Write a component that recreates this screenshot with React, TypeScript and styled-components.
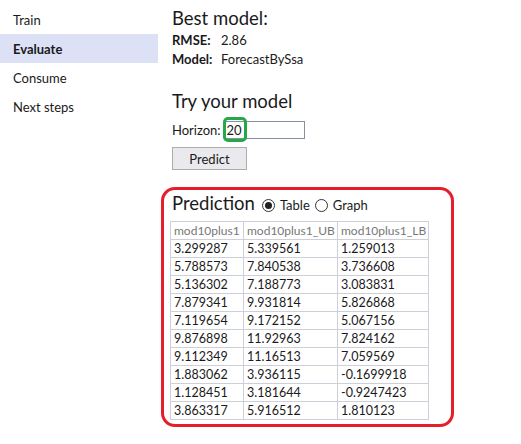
import React, { useState } from 'react';
import styled, { createGlobalStyle } from 'styled-components';

const GlobalStyle = createGlobalStyle`
  html, body {
    margin: 0;
    padding: 0;
    background: #ffffff;
  }
  body {
    font-family: "Segoe UI", Lato, "Noto Sans", "Liberation Sans", sans-serif;
    color: #1a1a1a;
    font-size: 13px;
  }
`;

const Page = styled.div`
  display: flex;
  width: 521px;
  height: 444px;
  overflow: hidden;
`;

const Sidebar = styled.nav`
  width: 158px;
  flex-shrink: 0;
  padding-top: 5px;
  display: flex;
  flex-direction: column;
`;

const NavItem = styled.div<{ $active?: boolean }>`
  height: 29px;
  display: flex;
  align-items: center;
  padding-left: 13px;
  font-size: 13px;
  font-weight: ${(p) => (p.$active ? 700 : 400)};
  background: ${(p) => (p.$active ? '#dce1f6' : 'transparent')};
  color: #1a1a1a;
`;

const Main = styled.main`
  padding: 6px 0 0 14px;
  display: flex;
  flex-direction: column;
  align-items: flex-start;
`;

const Heading = styled.h2<{ $gap?: number }>`
  margin: ${(p) => p.$gap ?? 0}px 0 0 0;
  font-size: 18.5px;
  line-height: 24px;
  font-weight: 400;
  color: #1a1a1a;
`;

const InfoGrid = styled.div`
  display: grid;
  grid-template-columns: 49px auto;
  margin-top: 1px;
`;

const InfoLabel = styled.div`
  font-weight: 700;
  line-height: 19px;
`;

const InfoValue = styled.div`
  line-height: 19px;
`;

const FieldRow = styled.div`
  display: flex;
  align-items: center;
  height: 22px;
  margin-top: 6px;
  gap: 3px;
`;

const InputWrap = styled.div`
  position: relative;
`;

const TextInput = styled.input`
  box-sizing: border-box;
  width: 81px;
  height: 18px;
  border: 1px solid #8591a0;
  padding: 0 2px;
  font: inherit;
  font-size: 13px;
  color: #1a1a1a;
  outline: none;
`;

const Highlight = styled.div`
  position: absolute;
  left: -1px;
  top: -4px;
  width: 24px;
  height: 25px;
  box-sizing: border-box;
  border: 3px solid #27a847;
  border-radius: 5px;
  pointer-events: none;
`;

const Button = styled.button`
  box-sizing: border-box;
  margin-top: 6px;
  width: 75px;
  height: 23px;
  background: #e9e9ee;
  border: 1px solid #adadad;
  font: inherit;
  font-size: 13px;
  color: #1a1a1a;
  padding: 0;
`;

const ResultBox = styled.section`
  box-sizing: border-box;
  margin: 17px 0 0 -11px;
  width: 293px;
  height: 240px;
  border: 3px solid #e61e2b;
  border-radius: 14px;
  padding: 1px 0 0 6px;
`;

const ResultHeader = styled.div`
  display: flex;
  align-items: center;
  padding-left: 2px;
`;

const RadioGroup = styled.div`
  display: flex;
  align-items: center;
  margin-left: 7px;
  margin-top: 4px;
`;

const RadioLabel = styled.label`
  display: flex;
  align-items: center;
  gap: 5px;
  margin-right: 5px;
  font-size: 13px;
`;

const RadioCircle = styled.span<{ $checked?: boolean }>`
  box-sizing: border-box;
  width: 13px;
  height: 13px;
  border-radius: 50%;
  border: 1px solid #333;
  display: flex;
  align-items: center;
  justify-content: center;
  &::after {
    content: '';
    width: 7px;
    height: 7px;
    border-radius: 50%;
    background: ${(p) => (p.$checked ? '#222' : 'transparent')};
  }
`;

const Table = styled.table`
  border-collapse: collapse;
  table-layout: fixed;
  width: 258px;
  margin-top: 6px;
  font-size: 12.5px;
`;

const Col = styled.col<{ $w: number }>`
  width: ${(p) => p.$w}px;
`;

const Th = styled.th`
  height: 17px;
  line-height: 16px;
  padding: 0 0 0 3px;
  text-align: left;
  font-weight: 400;
  font-size: 12px;
  color: #777;
  border: 1px solid #cfcfdc;
  white-space: nowrap;
  overflow: hidden;
`;

const Td = styled.td`
  height: 17px;
  line-height: 16px;
  padding: 0 0 0 3px;
  border: 1px solid #cfcfdc;
  white-space: nowrap;
  overflow: hidden;
  color: #1a1a1a;
`;

const columns = [
  { name: 'mod10plus1', width: 73 },
  { name: 'mod10plus1_UB', width: 94 },
  { name: 'mod10plus1_LB', width: 91 },
];

const rows = [
  ['3.299287', '5.339561', '1.259013'],
  ['5.788573', '7.840538', '3.736608'],
  ['5.136302', '7.188773', '3.083831'],
  ['7.879341', '9.931814', '5.826868'],
  ['7.119654', '9.172152', '5.067156'],
  ['9.876898', '11.92963', '7.824162'],
  ['9.112349', '11.16513', '7.059569'],
  ['1.883062', '3.936115', '-0.1699918'],
  ['1.128451', '3.181644', '-0.9247423'],
  ['3.863317', '5.916512', '1.810123'],
];

const navItems = ['Train', 'Evaluate', 'Consume', 'Next steps'];

export default function App() {
  const [horizon, setHorizon] = useState('20');
  const [view, setView] = useState<'table' | 'graph'>('table');

  return (
    <Page>
      <GlobalStyle />
      <Sidebar>
        {navItems.map((item) => (
          <NavItem key={item} $active={item === 'Evaluate'}>
            {item}
          </NavItem>
        ))}
      </Sidebar>
      <Main>
        <Heading>Best model:</Heading>
        <InfoGrid>
          <InfoLabel>RMSE:</InfoLabel>
          <InfoValue>2.86</InfoValue>
          <InfoLabel>Model:</InfoLabel>
          <InfoValue>ForecastBySsa</InfoValue>
        </InfoGrid>
        <Heading $gap={20}>Try your model</Heading>
        <FieldRow>
          <span>Horizon:</span>
          <InputWrap>
            <TextInput value={horizon} onChange={(e) => setHorizon(e.target.value)} />
            <Highlight />
          </InputWrap>
        </FieldRow>
        <Button>Predict</Button>
        <ResultBox>
          <ResultHeader>
            <Heading>Prediction</Heading>
            <RadioGroup>
              <RadioLabel onClick={() => setView('table')}>
                <RadioCircle $checked={view === 'table'} />
                Table
              </RadioLabel>
              <RadioLabel onClick={() => setView('graph')}>
                <RadioCircle $checked={view === 'graph'} />
                Graph
              </RadioLabel>
            </RadioGroup>
          </ResultHeader>
          <Table>
            <colgroup>
              {columns.map((c) => (
                <Col key={c.name} $w={c.width} />
              ))}
            </colgroup>
            <thead>
              <tr>
                {columns.map((c) => (
                  <Th key={c.name}>{c.name}</Th>
                ))}
              </tr>
            </thead>
            <tbody>
              {rows.map((r, i) => (
                <tr key={i}>
                  {r.map((v, j) => (
                    <Td key={j}>{v}</Td>
                  ))}
                </tr>
              ))}
            </tbody>
          </Table>
        </ResultBox>
      </Main>
    </Page>
  );
}
